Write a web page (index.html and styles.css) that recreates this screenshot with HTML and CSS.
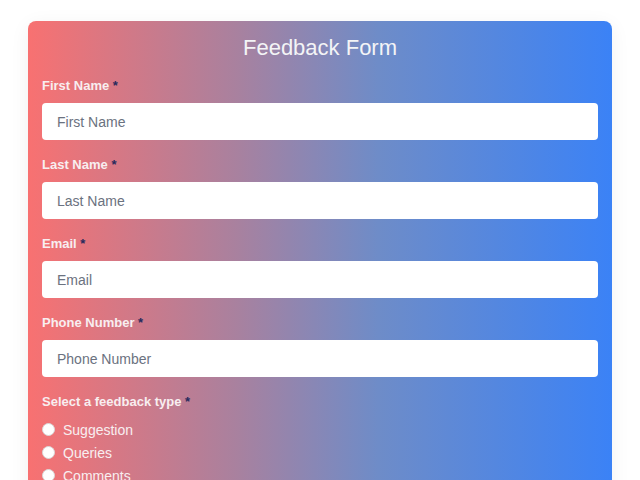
FILE: index.html
```html
<!DOCTYPE html>
<html>
<head>
<meta charset="utf-8">
<link rel="stylesheet" href="styles.css">
</head>
<body>
<form class="card">
  <h2 class="title">Feedback Form</h2>
  <div class="field">
    <label class="label">First Name <span class="req">*</span></label>
    <input class="input" type="text" placeholder="First Name">
  </div>
  <div class="field">
    <label class="label">Last Name <span class="req">*</span></label>
    <input class="input" type="text" placeholder="Last Name">
  </div>
  <div class="field">
    <label class="label">Email <span class="req">*</span></label>
    <input class="input" type="text" placeholder="Email">
  </div>
  <div class="field">
    <label class="label">Phone Number <span class="req">*</span></label>
    <input class="input" type="text" placeholder="Phone Number">
  </div>
  <div class="field">
    <label class="label label-group">Select a feedback type <span class="req">*</span></label>
    <div class="radios">
      <label class="radio"><span class="dot"></span>Suggestion</label>
      <label class="radio"><span class="dot"></span>Queries</label>
      <label class="radio"><span class="dot"></span>Comments</label>
    </div>
  </div>
</form>
</body>
</html>
```
FILE: styles.css
```css
html, body {
  margin: 0;
  padding: 0;
  background: #ffffff;
  font-family: "Liberation Sans", Arial, sans-serif;
}
body {
  padding: 21px 28px 0 28px;
}
.card {
  background: linear-gradient(to right, #f87171 0%, #a8819f 36%, #6e8cc8 60%, #3b82f6 100%);
  border-radius: 8px;
  padding: 14px 14px 20px 14px;
  box-shadow: 0 4px 20px rgba(0, 0, 0, 0.06);
  display: flex;
  flex-direction: column;
}
.title {
  margin: 0 0 17px 0;
  font-size: 22px;
  line-height: 26px;
  font-weight: normal;
  text-align: center;
  color: #f3f4f6;
}
.field {
  display: flex;
  flex-direction: column;
  margin-bottom: 17px;
}
.label {
  font-size: 13px;
  line-height: 15px;
  font-weight: bold;
  color: #f8eef0;
  margin-bottom: 10px;
}
.label-group {
  margin-bottom: 9px;
}
.req {
  color: #272a5c;
}
.input {
  box-sizing: border-box;
  height: 37px;
  width: 100%;
  border: none;
  border-radius: 4px;
  background: #ffffff;
  padding: 0 15px;
  font-family: "Liberation Sans", Arial, sans-serif;
  font-size: 14px;
  color: #374151;
  outline: none;
}
.input::placeholder {
  color: #6b7280;
}
.radios {
  display: flex;
  flex-direction: column;
}
.radio {
  display: flex;
  align-items: center;
  height: 23px;
  font-size: 14px;
  color: #f8eef0;
}
.dot {
  width: 13px;
  height: 13px;
  border-radius: 50%;
  background: #ffffff;
  border: 1px solid #d9d9d9;
  box-sizing: border-box;
  margin-right: 8px;
}
```
